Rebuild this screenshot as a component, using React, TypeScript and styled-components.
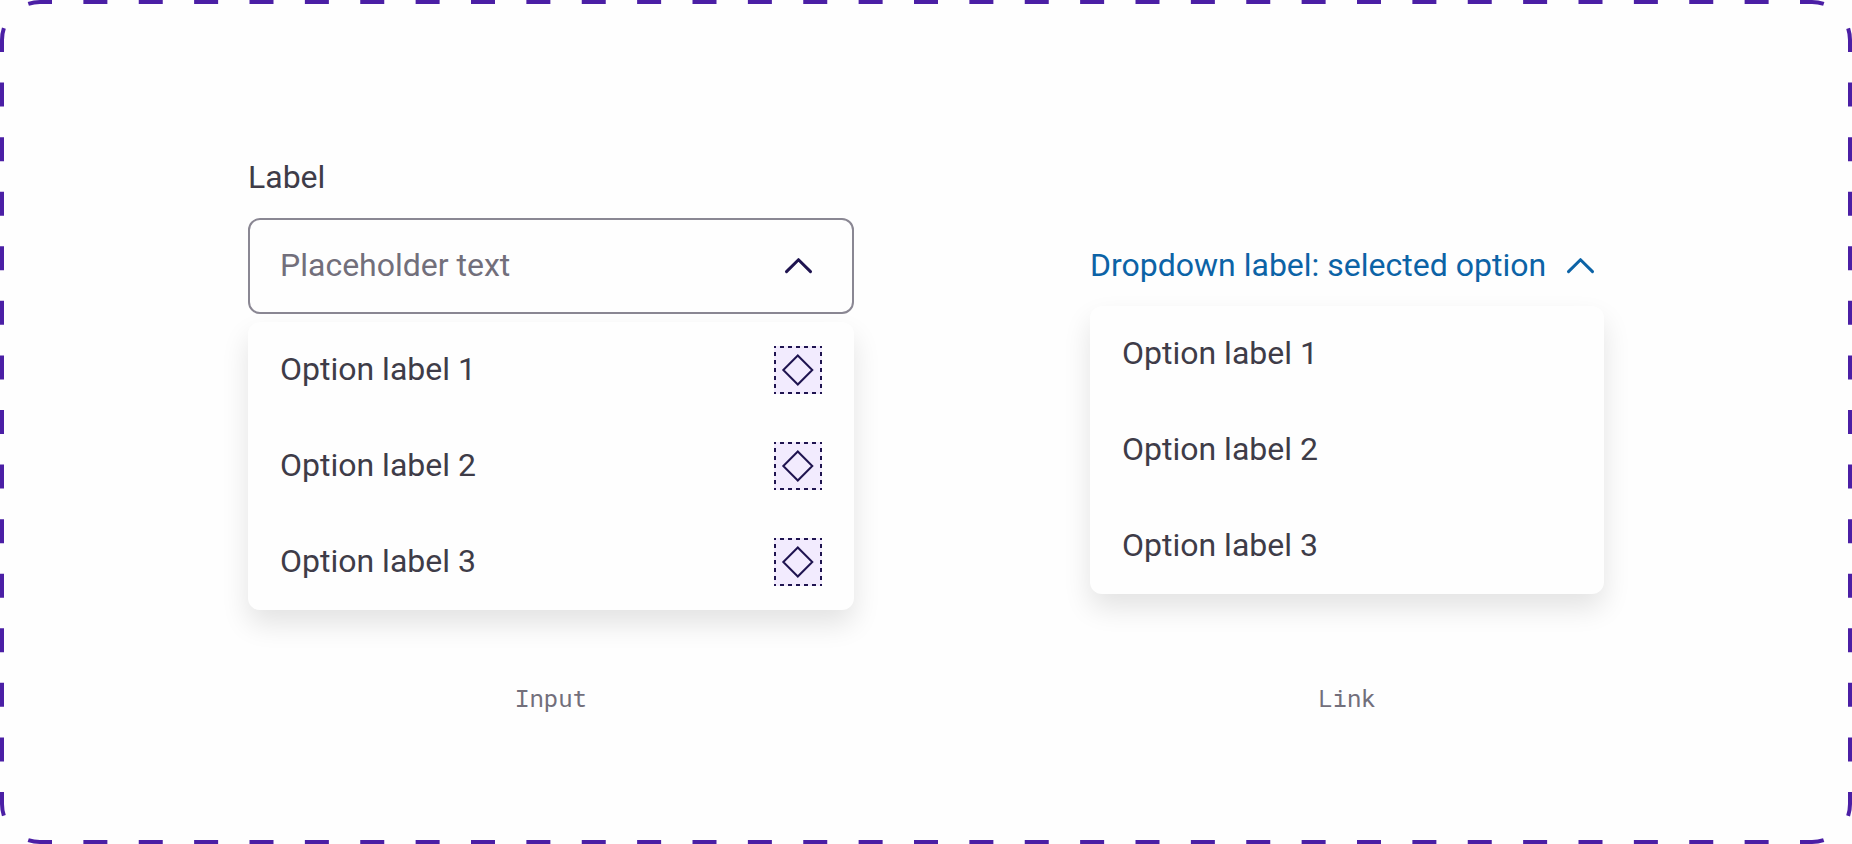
import React, { useLayoutEffect, useRef, useState } from "react";
import styled, { createGlobalStyle } from "styled-components";

const color = {
  surface: "#fefefe",
  frame: "#4b1fa5",
  text: "#3e3c48",
  muted: "#726f7b",
  border: "#8a8793",
  icon: "#1f1450",
  slot: "#f2ebfe",
  link: "#0c63a6",
};

const GlobalStyle = createGlobalStyle`
  *, *::before, *::after { box-sizing: border-box; }
  body { margin: 0; background: ${color.surface}; }
`;

const Frame = styled.main`
  position: relative;
  display: flex;
  align-items: stretch;
  gap: 236px;
  min-height: 100vh;
  padding: 154px 248px 130px;
  font-family: Roboto, "Liberation Sans", sans-serif;
  font-size: 32px;
  line-height: 48px;
  color: ${color.text};
`;

const Outline = styled.svg`
  position: absolute;
  inset: 0;
  width: 100%;
  height: 100%;
  pointer-events: none;
`;

const Example = styled.figure<{ $grow: number }>`
  display: flex;
  flex: ${(p) => p.$grow} 1 0;
  flex-direction: column;
  justify-content: space-between;
  min-width: 0;
  margin: 0;
`;

const Field = styled.div<{ $unlabelled?: boolean }>`
  display: flex;
  flex-direction: column;
  padding-top: ${(p) => (p.$unlabelled ? "88px" : "0")};
`;

const Label = styled.label`
  padding-bottom: 2px;
  margin-bottom: 16px;
  line-height: 46px;
`;

const InputBox = styled.div`
  display: flex;
  align-items: center;
  height: 96px;
  padding: 0 30px;
  border: 2px solid ${color.border};
  border-radius: 12px;
`;

const TextInput = styled.input`
  flex: 1;
  min-width: 0;
  height: 48px;
  padding: 0 0 2px;
  border: 0;
  outline: 0;
  background: none;
  font: inherit;
  color: inherit;

  &::placeholder {
    color: ${color.muted};
    opacity: 1;
  }
`;

const IconButton = styled.button`
  display: flex;
  padding: 0;
  border: 0;
  background: none;
  color: ${color.icon};
  cursor: pointer;
`;

const LinkButton = styled.button`
  display: flex;
  align-items: center;
  justify-content: space-between;
  padding: 0;
  border: 0;
  background: none;
  font: inherit;
  color: ${color.link};
  white-space: nowrap;
  cursor: pointer;
`;

const Text = styled.span`
  padding-bottom: 2px;
  line-height: 46px;
`;

const Menu = styled.ul<{ $gap: number }>`
  margin: ${(p) => p.$gap}px 0 0;
  padding: 0;
  list-style: none;
  border-radius: 12px;
  background: ${color.surface};
  box-shadow: 0 14px 28px rgba(0, 0, 0, 0.11);
`;

const OptionButton = styled.button`
  display: flex;
  align-items: center;
  justify-content: space-between;
  width: 100%;
  height: 96px;
  padding: 0 32px;
  border: 0;
  background: none;
  font: inherit;
  color: inherit;
  text-align: left;
  cursor: pointer;
`;

const Caption = styled.figcaption`
  margin-top: 64px;
  font-family: "Roboto Mono", "Liberation Mono", monospace;
  font-size: 24px;
  line-height: 32px;
  text-align: center;
  color: ${color.muted};
`;

const RADIUS = 40;
const STROKE = 4;
const DASH = 24;

/* Dashes are centred on the ends of every side, so each corner holds two half dashes. */
function DashedOutline() {
  const ref = useRef<SVGSVGElement>(null);
  const [size, setSize] = useState({ w: 0, h: 0 });

  useLayoutEffect(() => {
    const node = ref.current;
    if (!node) return;
    const measure = () => {
      const box = node.getBoundingClientRect();
      setSize({ w: box.width, h: box.height });
    };
    measure();
    const observer = new ResizeObserver(measure);
    observer.observe(node);
    return () => observer.disconnect();
  }, []);

  const { w, h } = size;
  const e = STROKE / 2;
  const r = RADIUS - e;
  const arc = (Math.PI * r) / 2;

  const side = (length: number) => {
    const period = length / Math.max(1, Math.round(length / 55));
    return `${DASH} ${period - DASH}`;
  };
  const across = side(w - 2 * RADIUS);
  const down = side(h - 2 * RADIUS);
  const corners = [
    `M${e} ${RADIUS}a${r} ${r} 0 0 1 ${r} ${-r}`,
    `M${w - RADIUS} ${e}a${r} ${r} 0 0 1 ${r} ${r}`,
    `M${w - e} ${h - RADIUS}a${r} ${r} 0 0 1 ${-r} ${r}`,
    `M${RADIUS} ${h - e}a${r} ${r} 0 0 1 ${-r} ${-r}`,
  ];

  return (
    <Outline ref={ref} aria-hidden="true" fill="none" stroke={color.frame} strokeWidth={STROKE}>
      {w > 0 && (
        <>
          <g strokeDashoffset={DASH / 2} strokeDasharray={across}>
            <path d={`M${RADIUS} ${e}H${w - RADIUS}`} />
            <path d={`M${RADIUS} ${h - e}H${w - RADIUS}`} />
          </g>
          <g strokeDashoffset={DASH / 2} strokeDasharray={down}>
            <path d={`M${e} ${RADIUS}V${h - RADIUS}`} />
            <path d={`M${w - e} ${RADIUS}V${h - RADIUS}`} />
          </g>
          {corners.map((d) => (
            <path key={d} d={d} strokeDasharray={`${DASH / 2} ${arc - DASH} ${DASH / 2} 0`} />
          ))}
        </>
      )}
    </Outline>
  );
}

const ChevronUp = () => (
  <svg width="48" height="48" viewBox="0 0 48 48" fill="none" aria-hidden="true">
    <path
      d="M12.5 29.6 24.5 17.7 36.5 29.6"
      stroke="currentColor"
      strokeWidth="3"
      strokeLinecap="round"
      strokeLinejoin="round"
    />
  </svg>
);

const SlotIcon = () => (
  <svg width="48" height="48" viewBox="0 0 48 48" fill="none" aria-hidden="true">
    <path d="M0 0H48V48H0Z" fill={color.slot} />
    <path
      d="M0 1H48M0 47H48M1 0V48M47 0V48"
      stroke={color.icon}
      strokeWidth="2"
      strokeDasharray="4 4"
      strokeDashoffset="2"
    />
    <path d="M23.8 9.5 38.3 24 23.8 38.5 9.3 24Z" stroke={color.icon} strokeWidth="2" />
  </svg>
);

const options = ["Option label 1", "Option label 2", "Option label 3"];

function OptionMenu({ gap, icons = false }: { gap: number; icons?: boolean }) {
  return (
    <Menu $gap={gap}>
      {options.map((option) => (
        <li key={option}>
          <OptionButton type="button">
            <Text>{option}</Text>
            {icons && <SlotIcon />}
          </OptionButton>
        </li>
      ))}
    </Menu>
  );
}

export default function App() {
  return (
    <>
      <GlobalStyle />
      <Frame>
        <DashedOutline />
        <Example $grow={606}>
          <Field>
            <Label htmlFor="dropdown-input">Label</Label>
            <InputBox>
              <TextInput id="dropdown-input" type="text" placeholder="Placeholder text" />
              <IconButton type="button" aria-label="Close options" aria-expanded="true">
                <ChevronUp />
              </IconButton>
            </InputBox>
            <OptionMenu gap={8} icons />
          </Field>
          <Caption>Input</Caption>
        </Example>
        <Example $grow={514}>
          <Field $unlabelled>
            <LinkButton type="button" aria-expanded="true">
              <Text>Dropdown label: selected option</Text>
              <ChevronUp />
            </LinkButton>
            <OptionMenu gap={16} />
          </Field>
          <Caption>Link</Caption>
        </Example>
      </Frame>
    </>
  );
}
